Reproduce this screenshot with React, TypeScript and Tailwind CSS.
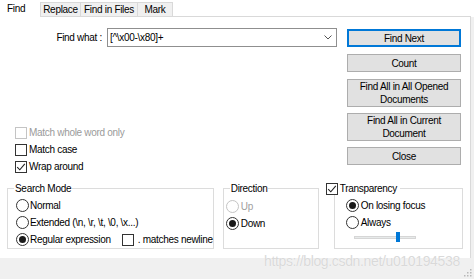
import React from 'react';

const font = { fontFamily: '"Liberation Sans", Arial, sans-serif' };

function Check({ checked = false, disabled = false }: { checked?: boolean; disabled?: boolean }) {
  return (
    <span
      className={`flex h-[12px] w-[12px] shrink-0 items-center justify-center border bg-white ${
        disabled ? 'border-[#c4c4c4]' : 'border-[#333333]'
      }`}
    >
      {checked && (
        <svg width="10" height="10" viewBox="0 0 10 10">
          <path d="M1.2 5.2 L3.8 7.8 L8.8 1.8" fill="none" stroke="#222" strokeWidth="1.1" />
        </svg>
      )}
    </span>
  );
}

function Radio({ checked = false, disabled = false }: { checked?: boolean; disabled?: boolean }) {
  return (
    <span
      className={`flex h-[13px] w-[13px] shrink-0 items-center justify-center rounded-full border bg-white ${
        disabled ? 'border-[#c4c4c4]' : 'border-[#333333]'
      }`}
    >
      {checked && <span className="h-[7px] w-[7px] rounded-full bg-[#1a1a1a]" />}
    </span>
  );
}

function Btn({ label, h, primary }: { label: React.ReactNode; h: string; primary?: boolean }) {
  return (
    <div
      className={`flex w-[114px] items-center justify-center bg-[#e1e1e1] text-center leading-[13px] ${h} ${
        primary ? 'border-2 border-[#0078d7]' : 'border border-[#adadad]'
      }`}
    >
      {label}
    </div>
  );
}

export default function App() {
  return (
    <div
      className="relative h-[279px] w-[474px] overflow-hidden whitespace-nowrap bg-[#f0f0f0] text-[10px] tracking-[-0.3px] text-black"
      style={font}
    >
      {/* tabs */}
      <div className="flex h-[17px] bg-white">
        <div className="flex w-[40px] items-center pl-[7px] pb-[1px]">Find</div>
        <div className="mt-[2px] flex w-[41px] items-center justify-center border border-[#d9d9d9] bg-[#f0f0f0]">Replace</div>
        <div className="mt-[2px] flex w-[57px] items-center justify-center border border-l-0 border-[#d9d9d9] bg-[#f0f0f0]">Find in Files</div>
        <div className="mt-[2px] flex w-[35px] items-center justify-center border border-l-0 border-[#d9d9d9] bg-[#f0f0f0]">Mark</div>
        <div className="w-[298px] border-b border-[#d9d9d9]" />
      </div>

      {/* panel */}
      <div className="h-[241px] w-[471px] border-r border-[#d9d9d9] bg-white">
        <div className="flex h-[165px]">
          <div className="w-[347px]">
            <div className="mt-[11px] flex items-center">
              <div className="w-[102px] text-right">Find what :</div>
              <div className="ml-[5px] flex h-[19px] w-[230px] items-center justify-between border border-[#8f8f8f] pl-[2px] pr-[4px]">
                <span>[^\x00-\x80]+</span>
                <svg width="8" height="5" viewBox="0 0 8 5">
                  <path d="M0.5 0.5 L4 4 L7.5 0.5" fill="none" stroke="#555" strokeWidth="1" />
                </svg>
              </div>
            </div>
            <div className="mt-[77px] flex flex-col pl-[15px]">
              <div className="flex h-[17px] items-center gap-[2px] text-[#9a9a9a]">
                <Check disabled />
                <span>Match whole word only</span>
              </div>
              <div className="flex h-[17px] items-center gap-[2px]">
                <Check />
                <span>Match case</span>
              </div>
              <div className="flex h-[17px] items-center gap-[2px]">
                <Check checked />
                <span>Wrap around</span>
              </div>
            </div>
          </div>
          <div className="flex flex-col pt-[12px]">
            <Btn label="Find Next" h="h-[18px]" primary />
            <div className="mt-[7px]">
              <Btn label="Count" h="h-[18px]" />
            </div>
            <div className="mt-[7px]">
              <Btn label={<>Find All in All Opened<br />Documents</>} h="h-[28px]" />
            </div>
            <div className="mt-[6px]">
              <Btn label={<>Find All in Current<br />Document</>} h="h-[28px]" />
            </div>
            <div className="mt-[6px]">
              <Btn label="Close" h="h-[18px]" />
            </div>
          </div>
        </div>

        {/* group boxes */}
        <div className="flex">
          <fieldset className="ml-[7px] h-[67px] w-[206px] border border-[#dcdcdc]">
            <legend className="ml-[6px] px-[1px] leading-[13px]">Search Mode</legend>
            <div className="mt-[2px] flex flex-col pl-[8px]">
              <div className="flex h-[17px] items-center gap-[1px]">
                <Radio />
                <span>Normal</span>
              </div>
              <div className="flex h-[17px] items-center gap-[1px]">
                <Radio />
                <span>Extended (\n, \r, \t, \0, \x...)</span>
              </div>
              <div className="flex h-[17px] items-center">
                <Radio checked />
                <span className="ml-[1px]">Regular expression</span>
                <span className="ml-[11px]">
                  <Check />
                </span>
                <span className="ml-[4px]">. matches newline</span>
              </div>
            </div>
          </fieldset>

          <fieldset className="ml-[9px] h-[67px] w-[96px] border border-[#dcdcdc]">
            <legend className="ml-[6px] px-[1px] leading-[13px]">Direction</legend>
            <div className="mt-[3px] flex flex-col pl-[2px]">
              <div className="flex h-[17px] items-center gap-[2px] text-[#a0a0a0]">
                <Radio disabled />
                <span>Up</span>
              </div>
              <div className="flex h-[17px] items-center gap-[2px]">
                <Radio checked />
                <span>Down</span>
              </div>
            </div>
          </fieldset>

          <fieldset className="ml-[15px] h-[67px] w-[129px] border border-[#dcdcdc]">
            <legend className="-ml-[9px] flex items-center gap-[2px] pr-[3px] leading-[13px]">
              <Check checked />
              <span>Transparency</span>
            </legend>
            <div className="mt-[2px] flex flex-col pl-[11px]">
              <div className="flex h-[17px] items-center gap-[2px]">
                <Radio checked />
                <span>On losing focus</span>
              </div>
              <div className="flex h-[17px] items-center gap-[2px]">
                <Radio />
                <span>Always</span>
              </div>
              <div className="relative ml-[8px] mt-[5px] h-[3px] w-[62px] border border-[#d6d6d6] bg-[#e7eaea]">
                <span className="absolute left-[41px] top-[-5px] h-[10px] w-[4px] bg-[#0078d7]" />
              </div>
            </div>
          </fieldset>
        </div>
      </div>

      {/* watermark */}
      <div
        className="pointer-events-none absolute left-[264px] top-[251px] text-[14px] tracking-[-0.35px] text-[#d9d9d9]"
        style={{ textShadow: '0 0 1px #ffffff' }}
      >
        https://blog.csdn.net/u010194538
      </div>

      {/* resize grip */}
      <svg className="absolute bottom-[2px] right-[2px]" width="8" height="8" viewBox="0 0 8 8">
        <rect x="6" y="0" width="1.5" height="1.5" fill="#b8b8b8" />
        <rect x="3" y="3" width="1.5" height="1.5" fill="#b8b8b8" />
        <rect x="6" y="3" width="1.5" height="1.5" fill="#b8b8b8" />
        <rect x="0" y="6" width="1.5" height="1.5" fill="#b8b8b8" />
        <rect x="3" y="6" width="1.5" height="1.5" fill="#b8b8b8" />
        <rect x="6" y="6" width="1.5" height="1.5" fill="#b8b8b8" />
      </svg>
    </div>
  );
}
